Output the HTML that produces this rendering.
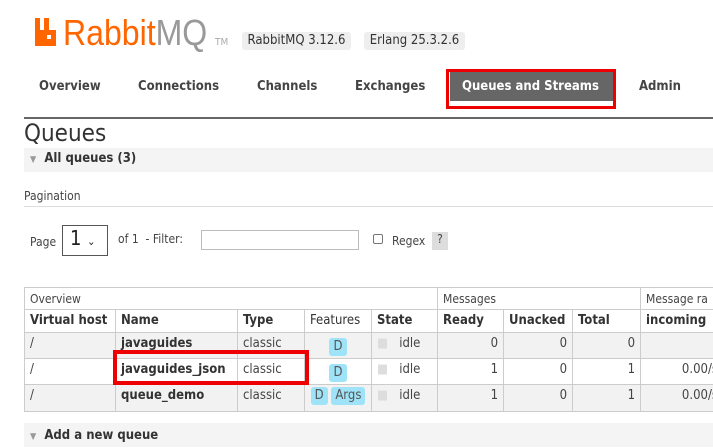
<!DOCTYPE html>
<html><head><meta charset="utf-8"><style>
*{margin:0;padding:0;box-sizing:border-box}
body{width:713px;height:448px;overflow:hidden;background:#fff;font-family:"DejaVu Sans Condensed","Liberation Sans",sans-serif;color:#444;position:relative;font-size:13px}
.a{position:absolute;white-space:nowrap}
.b{font-weight:bold}
.badge{background:#eee;border-radius:3px;color:#333;font-size:13px;height:18px;line-height:18px;text-align:center}
.nav{top:79px;font-weight:bold;font-size:13px;color:#444}
table{border-collapse:collapse;position:absolute;left:24px;top:287px;width:700px;font-size:13px;table-layout:fixed}
td{border:1px solid #ccc;padding:0 5px;white-space:nowrap;line-height:16px;vertical-align:top;overflow:hidden}
.g td{background:#f2f2f2}
.h td{font-weight:bold;color:#333;vertical-align:middle}
.d td{padding-top:3px}
.r{text-align:right}
.pill{display:inline-block;background:#9ee3f8;border-radius:3px;padding:1px 4px;color:#555;margin-top:2px}
.bar{background:#f4f4f4;height:24px;left:24px;width:689px}
</style></head><body>
<svg class="a" style="left:35px;top:18px" width="21" height="28" viewBox="0 0 21 28"><path d="M0 0h5v12h4V0h5v12h7v16H0z" fill="#f60"/><rect x="12" y="17" width="4" height="4" fill="#fff"/></svg>
<div class="a" style="left:63px;top:12px;font-size:36px;font-family:'Liberation Sans',sans-serif;transform:scaleX(0.89);transform-origin:0 0"><span style="color:#f60">Rabbit</span><span style="color:#999">MQ</span></div>
<div class="a" style="left:215px;top:37px;font-size:10px;color:#aaa">TM</div>
<div class="a badge" style="left:242px;top:32px;width:109px">RabbitMQ 3.12.6</div>
<div class="a badge" style="left:364px;top:32px;width:101px">Erlang 25.3.2.6</div>
<div class="a nav" style="left:39px">Overview</div>
<div class="a nav" style="left:138px">Connections</div>
<div class="a nav" style="left:257px">Channels</div>
<div class="a nav" style="left:355px">Exchanges</div>
<div class="a" style="left:446px;top:69px;width:170px;height:40px;border:3px solid #e00"></div>
<div class="a" style="left:450px;top:72px;width:163px;height:31px;background:#666;border-bottom:2px solid #fff"></div>
<div class="a nav" style="left:462px;color:#fff">Queues and Streams</div>
<div class="a nav" style="left:639px">Admin</div>
<div class="a" style="left:24px;top:117px;width:689px;height:2px;background:#666"></div>
<div class="a" style="left:24px;top:119px;font-size:24px;color:#333">Queues</div>
<div class="a bar" style="top:148px"></div>
<div class="a b" style="left:30px;top:151px;color:#333"><span style="color:#999;font-size:9px">▼</span>&nbsp; All queues (3)</div>
<div class="a" style="left:24px;top:189px;font-size:12px">Pagination</div>
<div class="a" style="left:24px;top:206px;width:689px;height:1px;background:#ddd"></div>
<div class="a" style="left:30px;top:235px;font-size:12px">Page</div>
<div class="a" style="left:62px;top:225px;width:46px;height:31px;border:1px solid #555;font-size:20px;padding-left:7px;color:#222">1 <span style="font-size:11px">⌄</span></div>
<div class="a" style="left:118px;top:232px;font-size:12px">of 1 &nbsp;- Filter:</div>
<div class="a" style="left:201px;top:230px;width:158px;height:20px;border:1px solid #bbb"></div>
<div class="a" style="left:373px;top:234px;width:10px;height:10px;border:1px solid #777;border-radius:2px"></div>
<div class="a" style="left:392px;top:234px;font-size:12px">Regex</div>
<div class="a" style="left:432px;top:232px;width:16px;height:18px;background:#ddd;font-size:12px;text-align:center">?</div>
<table>
<colgroup><col style="width:91px"><col style="width:122px"><col style="width:67px"><col style="width:67px"><col style="width:66px"><col style="width:66px"><col style="width:69px"><col style="width:68px"><col></colgroup>
<tr style="height:22px"><td colspan="5" style="font-size:12px;vertical-align:middle">Overview</td><td colspan="3" style="font-size:12px;vertical-align:middle">Messages</td><td style="font-size:12px;vertical-align:middle">Message ra</td></tr>
<tr class="h" style="height:23px"><td>Virtual host</td><td>Name</td><td>Type</td><td style="font-weight:normal">Features</td><td>State</td><td>Ready</td><td>Unacked</td><td>Total</td><td>incoming</td></tr>
<tr class="g d" style="height:26px"><td>/</td><td class="b" style="color:#333">javaguides</td><td>classic</td><td style="text-align:center"><span class="pill">D</span></td><td><span style="color:#ddd">■</span> &nbsp;&nbsp;idle</td><td class="r">0</td><td class="r">0</td><td class="r">0</td><td></td></tr>
<tr class="d" style="height:26px"><td>/</td><td class="b" style="color:#333">javaguides_json</td><td>classic</td><td style="text-align:center"><span class="pill">D</span></td><td><span style="color:#ddd">■</span> &nbsp;&nbsp;idle</td><td class="r">1</td><td class="r">0</td><td class="r">1</td><td class="r">0.00/s</td></tr>
<tr class="g d" style="height:27px"><td>/</td><td class="b" style="color:#333">queue_demo</td><td>classic</td><td style="text-align:center;padding:0"><span class="pill">D</span> <span class="pill">Args</span></td><td><span style="color:#ddd">■</span> &nbsp;&nbsp;idle</td><td class="r">1</td><td class="r">0</td><td class="r">1</td><td class="r">0.00/s</td></tr>
</table>
<div class="a" style="left:113px;top:350px;width:196px;height:35px;border:4px solid #e00"></div>
<div class="a bar" style="top:423px"></div>
<div class="a b" style="left:30px;top:428px;color:#333"><span style="color:#999;font-size:9px">▼</span>&nbsp; Add a new queue</div>
</body></html>
